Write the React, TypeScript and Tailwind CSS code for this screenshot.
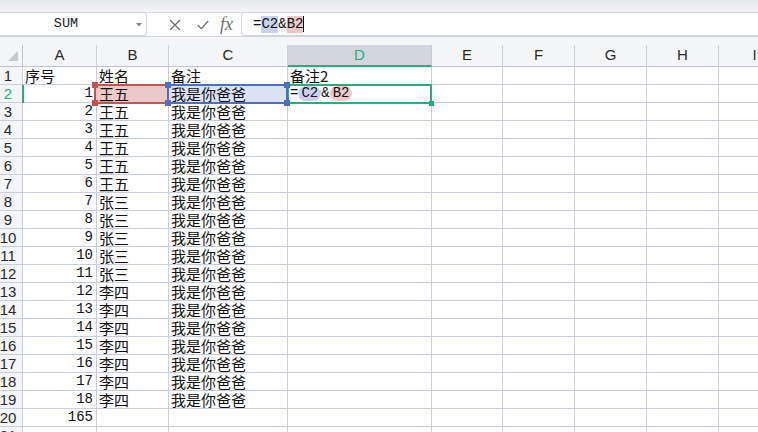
import React from "react";

const GRID = "border-[#c9cedc]";
const cjk = { fontFamily: '"Noto Sans CJK SC", "Noto Sans", sans-serif' };
const mono = { fontFamily: '"Liberation Mono", "DejaVu Sans Mono", monospace' };
const sans = { fontFamily: '"Liberation Sans", Arial, sans-serif' };

const cols = [
  { l: "A", w: "w-[74px]" },
  { l: "B", w: "w-[72px]" },
  { l: "C", w: "w-[119px]" },
  { l: "D", w: "w-[144px]" },
  { l: "E", w: "w-[71px]" },
  { l: "F", w: "w-[72px]" },
  { l: "G", w: "w-[72px]" },
  { l: "H", w: "w-[72px]" },
  { l: "I", w: "w-[72px]" },
];

type Row = { a?: string; aNum?: boolean; b?: string; c?: string; d?: string };

const names = ["王五", "王五", "王五", "王五", "王五", "王五", "张三", "张三", "张三", "张三", "张三", "李四", "李四", "李四", "李四", "李四", "李四", "李四"];

const rows: Row[] = [
  { a: "序号", b: "姓名", c: "备注", d: "备注2" },
  ...names.map((n, i) => ({ a: String(i + 1), aNum: true, b: n, c: "我是你爸爸" })),
  { a: "165", aNum: true },
  {},
];

function SelBox({
  pos,
  border,
  handle,
}: {
  pos: string;
  border: string;
  handle: string;
}) {
  return (
    <div className={`absolute border-2 ${pos} ${border} pointer-events-none`}>
      <div className={`absolute -left-[4px] -top-[4px] w-[6px] h-[6px] ${handle}`} />
      <div className={`absolute -right-[4px] -top-[4px] w-[6px] h-[6px] ${handle}`} />
      <div className={`absolute -left-[4px] -bottom-[4px] w-[6px] h-[6px] ${handle}`} />
      <div className={`absolute -right-[4px] -bottom-[4px] w-[6px] h-[6px] ${handle}`} />
    </div>
  );
}

export default function App() {
  return (
    <div className="w-[758px] h-[432px] overflow-hidden bg-white flex flex-col">
      {/* top strip */}
      <div className="h-[13px] shrink-0 bg-gradient-to-b from-[#e6e8eb] to-[#f4f5f7] border-b border-[#d9dce1]" />
      {/* formula toolbar */}
      <div className="h-[23px] shrink-0 flex items-stretch bg-white">
        <div className="w-[149px] -ml-[2px] -mt-[1px] h-[24px] border border-[#d3d6dc] rounded-[3px] relative flex items-center justify-center pr-[13px]">
          <span style={mono} className="text-[13.5px] text-[#222]">SUM</span>
          <svg className="absolute right-[4px] top-[10px]" width="6" height="4" viewBox="0 0 6 4">
            <path d="M0 0 L6 0 L3 3.5 Z" fill="#8a8a8a" />
          </svg>
        </div>
        <div className="w-[94px] flex items-center">
          <svg className="ml-[22px]" width="12" height="12" viewBox="0 0 12 12">
            <path d="M1 1 L11 11 M11 1 L1 11" stroke="#6f6f6f" strokeWidth="1.3" fill="none" />
          </svg>
          <svg className="ml-[16px]" width="12" height="10" viewBox="0 0 12 10">
            <path d="M0.8 5.2 L4.3 8.6 L11.2 1" stroke="#6f6f6f" strokeWidth="1.3" fill="none" />
          </svg>
          <span
            className="ml-[11px] text-[18px] italic text-[#6f6f6f] leading-none -mt-[2px]"
            style={{ fontFamily: '"Liberation Serif", "Times New Roman", serif' }}
          >
            fx
          </span>
        </div>
        <div className="flex-1 -mt-[1px] h-[24px] border border-[#d3d6dc] rounded-[3px] -mr-[4px] flex items-center pl-[11px]">
          <div style={mono} className="flex items-center text-[14px] text-[#111] leading-[17px]">
            <span>=</span>
            <span className="bg-[#c7d2ee]">C2</span>
            <span>&amp;</span>
            <span className="bg-[#ebc7c7]">B2</span>
            <span className="w-[1px] h-[16px] bg-black" />
          </div>
        </div>
      </div>
      {/* column headers */}
      <div className="shrink-0 border-t border-[#cfd3da] bg-[#f4f5f7] pt-[8px] flex">
        <div className="w-[23px] shrink-0 h-[22px] border-r border-b border-[#bcc2cf] relative">
          <svg className="absolute left-[8px] top-[6px]" width="10" height="10" viewBox="0 0 10 10">
            <path d="M10 0 L10 10 L0 10 Z" fill="#c6c8cc" />
          </svg>
        </div>
        {cols.map((c) =>
          c.l === "D" ? (
            <div
              key={c.l}
              style={sans}
              className={`${c.w} shrink-0 h-[22px] border-r border-b-2 border-r-[#c4c9d5] border-b-[#22b07d] bg-[#d3d6de] flex items-center justify-center text-[15px] text-[#22b07d]`}
            >
              {c.l}
            </div>
          ) : (
            <div
              key={c.l}
              style={sans}
              className={`${c.w} shrink-0 h-[22px] border-r border-b border-r-[#ccd0da] border-b-[#bcc2cf] flex items-center justify-center text-[15px] text-[#2a2a2a]`}
            >
              {c.l}
            </div>
          )
        )}
      </div>
      {/* grid body */}
      <div className="relative flex flex-col">
        {rows.map((r, i) => {
          const n = i + 1;
          const active = n === 2;
          return (
            <div key={n} className="flex h-[18px] shrink-0">
              <div className={`w-[23px] shrink-0 bg-[#f4f5f7] border-r border-b ${GRID} relative`}>
                <span
                  style={sans}
                  className={`absolute left-0 w-[16px] top-0 h-[17px] flex items-center justify-center text-[15px] leading-[17px] ${active ? "text-[#22b07d]" : "text-[#2a2a2a]"}`}
                >
                  {n}
                </span>
              </div>
              {/* A */}
              <div
                className={`w-[74px] shrink-0 border-r border-b ${GRID} flex items-center ${r.aNum ? "justify-end pr-[3px]" : "pl-[2px]"}`}
              >
                {r.a && (
                  <span style={r.aNum ? mono : cjk} className={`${r.aNum ? "text-[14px]" : "text-[15px]"} leading-[17px] text-[#111]`}>
                    {r.a}
                  </span>
                )}
              </div>
              {/* B */}
              <div className={`w-[72px] shrink-0 border-r border-b ${GRID} flex items-center pl-[2px] ${active ? "bg-[#ecc9c9]" : ""}`}>
                {r.b && (
                  <span style={cjk} className="text-[15px] leading-[17px] text-[#111]">
                    {r.b}
                  </span>
                )}
              </div>
              {/* C */}
              <div className={`w-[119px] shrink-0 border-r border-b ${GRID} flex items-center pl-[2px] ${active ? "bg-[#dbe2f4]" : ""}`}>
                {r.c && (
                  <span style={cjk} className="text-[15px] leading-[17px] text-[#111]">
                    {r.c}
                  </span>
                )}
              </div>
              {/* D */}
              <div className={`w-[144px] shrink-0 border-r border-b ${GRID} flex items-center pl-[2px]`}>
                {r.d && (
                  <span style={cjk} className="text-[15px] leading-[17px] text-[#111]">
                    {r.d}
                  </span>
                )}
                {active && (
                  <div style={mono} className="flex items-center text-[14px] text-[#111] leading-[15px]">
                    <span>=</span>
                    <span className="bg-[#c8d3ef] rounded-full px-[3px] h-[15px] flex items-center">C2</span>
                    <span>&amp;</span>
                    <span className="bg-[#efc9c9] rounded-full px-[3px] h-[15px] flex items-center">B2</span>
                  </div>
                )}
              </div>
              {cols.slice(4).map((c) => (
                <div key={c.l} className={`${c.w} shrink-0 border-r border-b ${GRID}`} />
              ))}
            </div>
          );
        })}
        {/* active row marker */}
        <div className="absolute left-[22px] top-[18px] w-[2px] h-[18px] bg-[#22b07d]" />
        {/* selection overlays */}
        <div className="absolute left-[287px] top-[17px] w-[145px] h-[20px] border-2 border-[#22b07d] pointer-events-none">
          <div className="absolute -right-[4px] -bottom-[4px] w-[5px] h-[5px] bg-[#22b07d]" />
        </div>
        <SelBox pos="left-[94px] top-[17px] w-[75px] h-[20px]" border="border-[#c9514e]" handle="bg-[#c9514e]" />
        <SelBox pos="left-[167px] top-[17px] w-[121px] h-[20px]" border="border-[#4a6fc8]" handle="bg-[#4a6fc8]" />
      </div>
    </div>
  );
}
